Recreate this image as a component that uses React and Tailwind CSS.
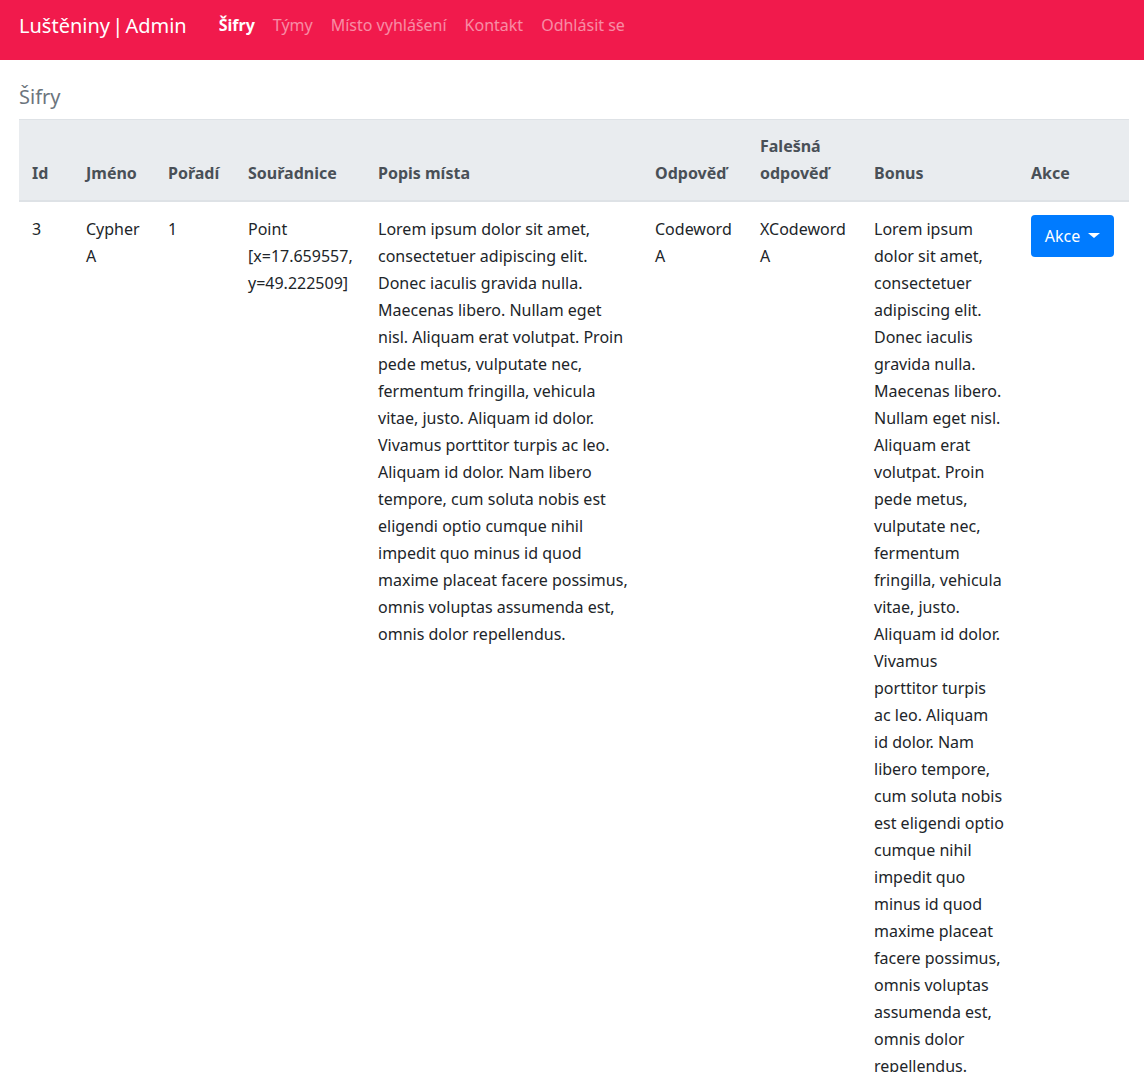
const lorem = "Lorem ipsum dolor sit amet, consectetuer adipiscing elit. Donec iaculis gravida nulla. Maecenas libero. Nullam eget nisl. Aliquam erat volutpat. Proin pede metus, vulputate nec, fermentum fringilla, vehicula vitae, justo. Aliquam id dolor. Vivamus porttitor turpis ac leo. Aliquam id dolor. Nam libero tempore, cum soluta nobis est eligendi optio cumque nihil impedit quo minus id quod maxime placeat facere possimus, omnis voluptas assumenda est, omnis dolor repellendus.";
const cols = [
  ["Id", "w-[54px]"], ["Jméno", "w-[82px]"], ["Pořadí", "w-[80px]"], ["Souřadnice", "w-[130px]"],
  ["Popis místa", "w-[277px]"], ["Odpověď", "w-[105px]"], ["Falešná odpověď", "w-[114px]"], ["Bonus", "w-[157px]"], ["Akce", "w-[111px]"],
];
export default function App() {
  return (
    <div className='h-[1072px] overflow-hidden bg-white text-[16px] leading-[27px] text-[#212529] font-["Noto_Sans","Open_Sans",sans-serif]'>
      <nav className="h-[60px] bg-[#f11a4c] flex items-center px-[19px] pb-[10px]">
        <span className="text-[20px] text-white mr-[32px] [word-spacing:-3px]">Luštěniny | Admin</span>
        <div className="flex gap-[18px]">
          <span className="text-white font-bold">Šifry</span>
          <span className="text-white/50">Týmy</span>
          <span className="text-white/50">Místo vyhlášení</span>
          <span className="text-white/50">Kontakt</span>
          <span className="text-white/50">Odhlásit se</span>
        </div>
      </nav>
      <div className="px-[19px] pt-[23px]">
        <h1 className="text-[20px] leading-[28px] text-[#6c757d] mb-[8px]">Šifry</h1>
        <table className="w-[1110px] table-fixed border-collapse">
          <thead>
            <tr className="bg-[#e9ecef] text-[#495057] border-t border-b-2 border-[#dee2e6]">
              {cols.map(([c, w]) => (
                <th key={c} className={`${w} px-[13px] py-[13px] text-left font-bold align-bottom`}>{c}</th>
              ))}
            </tr>
          </thead>
          <tbody>
            <tr className="align-top">
              <td className="px-[13px] pt-[14px] pb-[13px]">3</td>
              <td className="px-[13px] pt-[14px] pb-[13px]">Cypher A</td>
              <td className="px-[13px] pt-[14px] pb-[13px]">1</td>
              <td className="px-[13px] pt-[14px] pb-[13px]">Point [x=17.659557, y=49.222509]</td>
              <td className="px-[13px] pt-[14px] pb-[13px]">{lorem}</td>
              <td className="px-[13px] pt-[14px] pb-[13px]">Codeword A</td>
              <td className="px-[13px] pt-[14px] pb-[13px]">XCodeword A</td>
              <td className="px-[13px] pt-[14px] pb-[13px]">{lorem}</td>
              <td className="px-[13px] py-[13px]">
                <button className="h-[42px] w-[83px] rounded-[4px] bg-[#007bff] text-white flex items-center justify-center gap-[8px]">
                  Akce
                  <span className="w-0 h-0 mb-[2px] border-x-[6px] border-x-transparent border-t-[5px] border-t-white"></span>
                </button>
              </td>
            </tr>
          </tbody>
        </table>
      </div>
    </div>
  );
}
